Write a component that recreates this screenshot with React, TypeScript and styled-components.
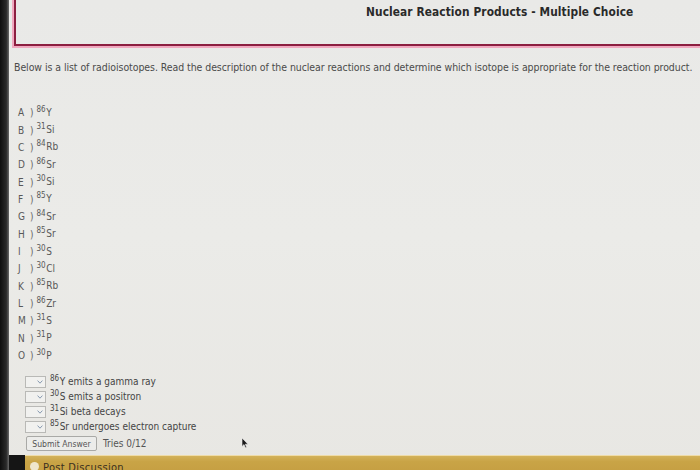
import React from "react";
import styled, { createGlobalStyle } from "styled-components";

const Global = createGlobalStyle`
  html, body { margin: 0; padding: 0; width: 700px; height: 470px; overflow: hidden; background: #161616; }
  #root { width: 700px; height: 470px; }
`;

const Screen = styled.div`
  display: flex;
  width: 700px;
  height: 470px;
  position: relative;
  overflow: hidden;
`;

const Bezel = styled.div`
  width: 9px;
  flex: none;
  background: linear-gradient(90deg, #0e0e0e 0%, #2a2a2a 70%, #6a6a6a 100%);
`;

const Page = styled.div`
  flex: 1;
  display: flex;
  flex-direction: column;
  background: linear-gradient(180deg, #e9e9e7 0%, #ebebe8 50%, #e8e7e3 100%);
  font-family: "DejaVu Sans Condensed", "DejaVu Sans", sans-serif;
  color: #444;
  min-width: 0;
`;

const Header = styled.div`
  margin-left: 5px;
  margin-right: -20px;
  height: 46px;
  border-left: 2px solid #8c1f40;
  border-bottom: 2px solid #8c1f40;
  box-shadow: -1px 1px 0 1px #f0a8bf;
  display: flex;
  align-items: flex-start;
  padding-left: 350px;
  padding-top: 5px;
  box-sizing: border-box;
  flex: none;
`;

const Title = styled.h1`
  margin: 0;
  font-family: "DejaVu Sans Condensed", "DejaVu Sans", sans-serif;
  font-weight: bold;
  font-size: 11.8px;
  color: #2a2a2a;
  letter-spacing: 0.1px;
`;

const Intro = styled.p`
  margin: 15px 0 0 5px;
  font-size: 10.45px;
  color: #4a4a4a;
  white-space: nowrap;
  letter-spacing: -0.05px;
`;

const OptionList = styled.ul`
  list-style: none;
  margin: 31px 0 0 9px;
  padding: 0;
  display: flex;
  flex-direction: column;
`;

const Option = styled.li`
  height: 17.36px;
  display: flex;
  align-items: center;
  font-size: 10px;
  color: #585858;
`;

const Letter = styled.span`
  display: inline-block;
  width: 12px;
`;

const Paren = styled.span`
  margin-right: 3px;
  color: #666;
`;

const Isotope = styled.span`
  line-height: 1;
`;

const Sup = styled.sup`
  font-size: 8px;
  vertical-align: 4px;
  line-height: 0;
  margin-right: 0.5px;
`;

const Questions = styled.div`
  margin: 12px 0 0 16px;
  display: flex;
  flex-direction: column;
  gap: 3px;
`;

const QRow = styled.div`
  display: flex;
  align-items: center;
  height: 12px;
  gap: 4px;
  font-size: 10px;
  color: #444;
`;

const SelectBox = styled.div`
  width: 21px;
  height: 12px;
  box-sizing: border-box;
  border: 1px solid #b9b9b6;
  background: #f1f1ef;
  display: flex;
  align-items: center;
  justify-content: flex-end;
  padding-right: 2px;
`;

const SubmitRow = styled.div`
  display: flex;
  align-items: center;
  gap: 6px;
  margin-top: 0px;
  margin-left: 1px;
`;

const SubmitButton = styled.button`
  height: 15px;
  width: 71px;
  padding: 0;
  border: 1px solid #a9a9a6;
  border-radius: 2px;
  background: #ececea;
  font-family: "DejaVu Sans Condensed", "DejaVu Sans", sans-serif;
  font-size: 8.6px;
  color: #555;
`;

const Tries = styled.span`
  font-size: 10px;
  color: #555;
`;

const Footer = styled.div`
  margin-top: auto;
  height: 15px;
  display: flex;
  align-items: flex-end;
  background: #151515;
  flex: none;
`;

const DiscussionBar = styled.div`
  margin-left: 16px;
  flex: 1;
  height: 15px;
  background: linear-gradient(180deg, #d3b25a 0%, #c9a446 40%, #c6a043 100%);
  border-top: 1px solid #efdca8;
  box-sizing: border-box;
  display: flex;
  align-items: flex-start;
  gap: 4px;
  padding-left: 5px;
  padding-top: 6px;
  overflow: hidden;
`;

const DiscIcon = styled.span`
  width: 9px;
  height: 9px;
  border-radius: 50%;
  background: #efe6cc;
  flex: none;
`;

const DiscText = styled.span`
  font-size: 11px;
  color: #3a3020;
  line-height: 1;
  letter-spacing: 0.3px;
`;

const Cursor = styled.svg`
  position: absolute;
  left: 241px;
  top: 437px;
`;

const isotopes: [string, string, string][] = [
  ["A", "86", "Y"],
  ["B", "31", "Si"],
  ["C", "84", "Rb"],
  ["D", "86", "Sr"],
  ["E", "30", "Si"],
  ["F", "85", "Y"],
  ["G", "84", "Sr"],
  ["H", "85", "Sr"],
  ["I", "30", "S"],
  ["J", "30", "Cl"],
  ["K", "85", "Rb"],
  ["L", "86", "Zr"],
  ["M", "31", "S"],
  ["N", "31", "P"],
  ["O", "30", "P"],
];

const questions: [string, string, string][] = [
  ["86", "Y", " emits a gamma ray"],
  ["30", "S", " emits a positron"],
  ["31", "Si", " beta decays"],
  ["85", "Sr", " undergoes electron capture"],
];

const Chevron = () => (
  <svg width="6" height="4" viewBox="0 0 6 4">
    <path d="M0.6 0.6 L3 3.2 L5.4 0.6" fill="none" stroke="#7a8fa8" strokeWidth="0.9" />
  </svg>
);

export default function App() {
  return (
    <Screen>
      <Global />
      <Bezel />
      <Page>
        <Header>
          <Title>Nuclear Reaction Products - Multiple Choice</Title>
        </Header>
        <Intro>
          Below is a list of radioisotopes. Read the description of the nuclear reactions and determine which isotope is appropriate for the reaction product.
        </Intro>
        <OptionList>
          {isotopes.map(([l, m, s]) => (
            <Option key={l}>
              <Letter>{l}</Letter>
              <Paren>)</Paren>
              <Isotope>
                <Sup>{m}</Sup>
                {s}
              </Isotope>
            </Option>
          ))}
        </OptionList>
        <Questions>
          {questions.map(([m, s, t]) => (
            <QRow key={s + m}>
              <SelectBox>
                <Chevron />
              </SelectBox>
              <Isotope>
                <Sup>{m}</Sup>
                {s}
                {t}
              </Isotope>
            </QRow>
          ))}
          <SubmitRow>
            <SubmitButton>Submit Answer</SubmitButton>
            <Tries>Tries 0/12</Tries>
          </SubmitRow>
        </Questions>
        <Footer>
          <DiscussionBar>
            <DiscIcon />
            <DiscText>Post Discussion</DiscText>
          </DiscussionBar>
        </Footer>
      </Page>
      <Cursor width="8" height="12" viewBox="0 0 8 12">
        <path d="M1 1 L1 9.5 L3 7.6 L4.4 10.8 L5.6 10.3 L4.3 7.2 L7 7.2 Z" fill="#1a1a1a" stroke="#eee" strokeWidth="0.6" />
      </Cursor>
    </Screen>
  );
}
